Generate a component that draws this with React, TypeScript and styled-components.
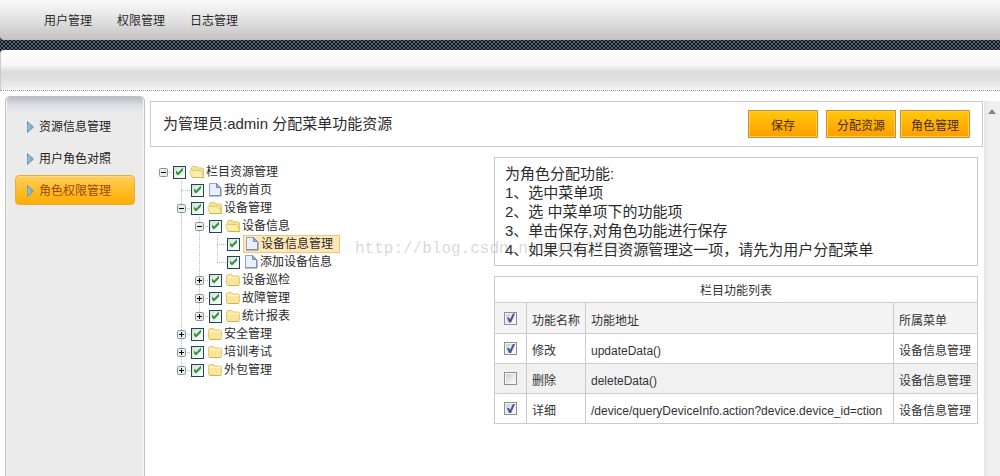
import React from "react";
import styled, { createGlobalStyle, css } from "styled-components";

const GlobalStyle = createGlobalStyle`
  *, *::before, *::after { box-sizing: border-box; }
  body {
    margin: 0;
    background: #fff;
    color: #2b2b2b;
    font-family: "Liberation Sans", "Noto Sans CJK SC", sans-serif;
    font-size: 12px;
    line-height: 18px;
  }
  ul { list-style: none; margin: 0; padding: 0; }
`;

const Page = styled.div`
  display: flex;
  flex-direction: column;
  min-height: 100vh;
`;

const Backdrop = styled.header`
  background-color: #0d1722;
  background-image:
    linear-gradient(45deg, transparent 42%, #55616d 42% 58%, transparent 58%),
    linear-gradient(135deg, transparent 42%, #55616d 42% 58%, transparent 58%);
  background-size: 4px 4px;
`;

const TopNav = styled.nav`
  display: flex;
  align-items: center;
  gap: 25px;
  height: 40px;
  margin-bottom: 10px;
  padding: 2px 0 0 44px;
  border-radius: 0 0 0 4px;
  background: linear-gradient(#fbfbfb, #dedede 55%, #c3c2c1);
`;

const TopLink = styled.a`
  color: #2b2b2b;
  font-size: 12px;
  text-decoration: none;
`;

const SubBar = styled.div`
  height: 41px;
  border-left: 1px solid #ccc;
  border-bottom: 1px dotted #999;
  border-radius: 4px 0 0 0;
  background: linear-gradient(#fff, #f6f6f6 38%, #dcdcdc 54%, #dedede 70%, #f1f1f1);
`;

const Body = styled.div`
  display: flex;
  flex: 1;
  padding-left: 5px;
  background: #fff;
`;

const Sidebar = styled.nav`
  flex: 0 0 140px;
  margin: 5px 5px 0 0;
  padding: 14px 9px 0;
  border: 1px solid #c2c2c2;
  border-bottom: 0;
  border-radius: 5px 5px 0 0;
  background: linear-gradient(#b8bcc4, #dcdee3 8px, #ebebeb 16px);
  box-shadow: inset 1px 0 #f6f6f6, inset -1px 0 #f6f6f6;
`;

const SideList = styled.ul`
  display: grid;
  gap: 2px;
`;

const SideLink = styled.a<{ $active?: boolean }>`
  display: flex;
  align-items: center;
  gap: 5px;
  height: 30px;
  padding: 1px 0 0 11px;
  border: 1px solid transparent;
  border-radius: 4px;
  color: #222;
  text-decoration: none;
  ${(p) =>
    p.$active &&
    css`
      color: #a0460c;
      border-color: #efa83a;
      background: linear-gradient(#ffcf5c, #fdba20 60%, #fdae08);
      box-shadow: inset 0 1px #ffdc88;
    `}
`;

const Main = styled.main`
  position: relative;
  flex: 1;
  min-width: 0;
  padding-top: 10px;
`;

const TitleBar = styled.div`
  display: flex;
  align-items: center;
  justify-content: space-between;
  height: 46px;
  margin-right: 1px;
  padding: 0 12px;
  border: 1px solid #ccc;
`;

const Title = styled.h1`
  margin: 0;
  font-size: 15px;
  font-weight: normal;
`;

const Actions = styled.div`
  display: flex;
  gap: 4px;
`;

const ActionButton = styled.button<{ $lead?: boolean }>`
  width: 70px;
  height: 28px;
  margin-right: ${(p) => (p.$lead ? "4px" : "0")};
  padding: 3px 0 0;
  border: 1px solid #c9922a;
  background: linear-gradient(#ffc90a, #ff9d00);
  box-shadow: inset 0 0 0 1px #ffc94a;
  color: #4a2c06;
  font: inherit;
`;

const Columns = styled.div`
  display: grid;
  grid-template-columns: 344px minmax(0, 1fr);
  padding: 10px 6px 0 0;
`;

const Tree = styled.ul`
  padding: 6px 0 0 5px;
`;

const Branch = styled.ul`
  padding-left: 18px;
`;

const TreeItem = styled.li<{ $root?: boolean }>`
  background: repeating-linear-gradient(#bbb 0 1px, transparent 1px 2px) 8px 0 / 1px 100% no-repeat;
  &:last-child { background-size: 1px 9px; }
  ${(p) => p.$root && css`&&{ background: none; }`}
`;

const TreeRow = styled.div`
  display: flex;
  align-items: center;
  height: 18px;
`;

const ToggleCell = styled.span`
  display: flex;
  align-items: center;
  flex: 0 0 18px;
  height: 18px;
  padding-left: 4px;
  background: repeating-linear-gradient(90deg, #bbb 0 1px, transparent 1px 2px) 8px 9px / 9px 1px no-repeat;
`;

const Toggle = styled.button`
  display: block;
  width: 9px;
  height: 9px;
  padding: 0;
  border: 0;
  background: #fff;
  svg { display: block; }
`;

const TreeCheck = styled.input`
  appearance: none;
  flex: 0 0 13px;
  height: 13px;
  margin: 0 3px 0 0;
  border: 1px solid #1f4660;
  background: linear-gradient(135deg, #dcdcd7, #fff);
  &:checked::before {
    content: "";
    display: block;
    width: 11px;
    height: 11px;
    background: #2b9a3a;
    clip-path: polygon(2px 4px, 4px 6px, 9px 1px, 9px 4px, 4px 9px, 2px 7px);
  }
`;

const NodeLabel = styled.label<{ $selected?: boolean }>`
  display: flex;
  align-items: center;
  gap: 1px;
  height: 18px;
  white-space: nowrap;
  ${(p) =>
    p.$selected &&
    css`
      padding-right: 6px;
      border: 1px solid #f5c479;
      background: #ffe6b8;
    `}
`;

const Detail = styled.div`
  display: grid;
  align-content: start;
  gap: 10px;
`;

const Help = styled.section`
  padding: 6px 10px;
  border: 1px solid #ccc;
  font-size: 15px;
  line-height: 19px;
  p { margin: 0; }
`;

const Table = styled.table`
  width: 100%;
  border-collapse: collapse;
  table-layout: fixed;
  color: #333;
  th, td {
    height: 31px;
    padding: 5px 0 0 5px;
    border: 1px solid #ccc;
    font-weight: normal;
    text-align: left;
    white-space: nowrap;
  }
  tbody td { height: 30px; }
  thead tr:nth-child(even) { background: #f4f4f4; }
  tbody tr:nth-child(even) { background: #f1f1f1; }
`;

const TableTitle = styled.th`
  && {
    height: 26px;
    padding: 2px 0 0;
    text-align: center;
  }
`;

const CheckCell = styled.td`
  && {
    padding: 0;
    text-align: center;
  }
`;

const RowCheck = styled.input`
  appearance: none;
  display: block;
  width: 13px;
  height: 13px;
  margin: 0 auto;
  border: 1px solid #8e8f8f;
  background: linear-gradient(135deg, #c4c9d0, #f6f6f6 80%);
  box-shadow: inset 0 0 0 1px #f4f4f4;
  &:checked::before {
    content: "";
    display: block;
    width: 11px;
    height: 11px;
    background: #3f5590;
    clip-path: polygon(2px 5px, 4px 5px, 5px 7px, 8px 1px, 10px 1px, 6px 10px, 4px 10px);
  }
`;

const Scrollbar = styled.div`
  flex: 0 0 16px;
  margin-top: 10px;
  padding: 0 0 0 4px;
  background: linear-gradient(90deg, #e5e5e5, #f0f0f0 5px);
`;

const Watermark = styled.span`
  position: absolute;
  left: 205px;
  top: 148px;
  color: rgba(120, 120, 120, 0.3);
  font: 16px/20px "Liberation Mono", monospace;
  pointer-events: none;
`;

const SideArrow = () => (
  <svg width="7" height="12" viewBox="0 0 7 12" aria-hidden="true">
    <path d="M.5.5 6.5 6 .5 11.5Z" fill="#72abd0" stroke="#6f9dbb" />
    <path d="M2 3v6" stroke="#add4eb" />
  </svg>
);

const ToggleIcon = ({ open }: { open: boolean }) => (
  <svg width="9" height="9" viewBox="0 0 9 9" aria-hidden="true">
    <rect x=".5" y=".5" width="8" height="8" rx="1" fill="#eceae6" stroke="#8496a9" />
    <path d={open ? "M2 4.5h5" : "M2 4.5h5M4.5 2v5"} stroke="#000" />
  </svg>
);

const FolderIcon = ({ open }: { open: boolean }) => (
  <svg width="16" height="16" viewBox="0 0 16 16" aria-hidden="true">
    {open ? (
      <>
        <path d="M2.5 12.5v-9l1-1h4l1.5 1.5h4.5l1 1v8Z" fill="#f5e391" stroke="#dcc670" />
        <path d="M3 13.5.7 7.5l.8-1h9.500l1.500 1 2 6Z" fill="#fbefa8" stroke="#e0ca75" />
        <path d="M3 13.5h12" stroke="#cdb25c" />
      </>
    ) : (
      <>
        <path d="M1.5 12.5v-9l1-1h4L8 4h5.500l1 1v7.500l-1 1h-11Z" fill="#f8e798" stroke="#e0cb7c" />
        <path d="M2.5 5.5h11.5" stroke="#fff7cc" />
        <path d="M2.5 13.5h11.5" stroke="#cdb25c" />
      </>
    )}
  </svg>
);

const FileIcon = () => (
  <svg width="16" height="16" viewBox="0 0 16 16" aria-hidden="true">
    <path d="M2.5 1.5h7l4 4v8h-11Z" fill="#e8f0fc" stroke="#8fa5ca" />
    <path d="M9.5 1.5v4h4Z" fill="#9eb8e0" stroke="#7088b4" />
    <path d="M2 14h12V6" fill="none" stroke="#6c82ab" />
  </svg>
);

type Node = { label: string; open?: boolean; selected?: boolean; file?: boolean; children?: Node[] };

const resources: Node = {
  label: "栏目资源管理",
  open: true,
  children: [
    { label: "我的首页", file: true },
    {
      label: "设备管理",
      open: true,
      children: [
        {
          label: "设备信息",
          open: true,
          children: [
            { label: "设备信息管理", file: true, selected: true },
            { label: "添加设备信息", file: true },
          ],
        },
        { label: "设备巡检" },
        { label: "故障管理" },
        { label: "统计报表" },
      ],
    },
    { label: "安全管理" },
    { label: "培训考试" },
    { label: "外包管理" },
  ],
};

const TreeNode = ({ node, path, root }: { node: Node; path: string; root?: boolean }) => (
  <TreeItem $root={root}>
    <TreeRow>
      <ToggleCell>
        {!node.file && (
          <Toggle type="button" aria-label={node.label} aria-expanded={!!node.open}>
            <ToggleIcon open={!!node.open} />
          </Toggle>
        )}
      </ToggleCell>
      <TreeCheck type="checkbox" id={path} defaultChecked />
      <NodeLabel htmlFor={path} $selected={node.selected}>
        {node.file ? <FileIcon /> : <FolderIcon open={!!node.open} />}
        {node.label}
      </NodeLabel>
    </TreeRow>
    {node.children && (
      <Branch>
        {node.children.map((child, i) => (
          <TreeNode key={child.label} node={child} path={`${path}-${i}`} />
        ))}
      </Branch>
    )}
  </TreeItem>
);

const topLinks = ["用户管理", "权限管理", "日志管理"];
const sideLinks = ["资源信息管理", "用户角色对照", "角色权限管理"];
const features = [
  { name: "修改", url: "updateData()", checked: true },
  { name: "删除", url: "deleteData()", checked: false },
  { name: "详细", url: "/device/queryDeviceInfo.action?device.device_id=ction", checked: true },
];

export default function App() {
  return (
    <Page>
      <GlobalStyle />
      <Backdrop>
        <TopNav>
          {topLinks.map((t) => (
            <TopLink key={t} href="#">{t}</TopLink>
          ))}
        </TopNav>
        <SubBar />
      </Backdrop>
      <Body>
        <Sidebar>
          <SideList>
            {sideLinks.map((t, i) => (
              <li key={t}>
                <SideLink href="#" $active={i === 2}>
                  <SideArrow />
                  {t}
                </SideLink>
              </li>
            ))}
          </SideList>
        </Sidebar>
        <Main>
          <TitleBar>
            <Title>为管理员:admin 分配菜单功能资源</Title>
            <Actions>
              <ActionButton type="button" $lead>保存</ActionButton>
              <ActionButton type="button">分配资源</ActionButton>
              <ActionButton type="button">角色管理</ActionButton>
            </Actions>
          </TitleBar>
          <Columns>
            <Tree>
              <TreeNode node={resources} path="node" root />
            </Tree>
            <Detail>
              <Help>
                <p>为角色分配功能:</p>
                <p>1、选中菜单项</p>
                <p>2、选 中菜单项下的功能项</p>
                <p>3、单击保存,对角色功能进行保存</p>
                <p>4、如果只有栏目资源管理这一项，请先为用户分配菜单</p>
              </Help>
              <Table>
                <colgroup>
                  <col width="32" />
                  <col width="59" />
                  <col />
                  <col width="84" />
                </colgroup>
                <thead>
                  <tr>
                    <TableTitle colSpan={4}>栏目功能列表</TableTitle>
                  </tr>
                  <tr>
                    <CheckCell as="th">
                      <RowCheck type="checkbox" aria-label="栏目功能列表" defaultChecked />
                    </CheckCell>
                    <th>功能名称</th>
                    <th>功能地址</th>
                    <th>所属菜单</th>
                  </tr>
                </thead>
                <tbody>
                  {features.map((f) => (
                    <tr key={f.name}>
                      <CheckCell>
                        <RowCheck type="checkbox" aria-label={f.name} defaultChecked={f.checked} />
                      </CheckCell>
                      <td>{f.name}</td>
                      <td>{f.url}</td>
                      <td>设备信息管理</td>
                    </tr>
                  ))}
                </tbody>
              </Table>
            </Detail>
          </Columns>
          <Watermark>http://blog.csdn.net/u012750853</Watermark>
        </Main>
        <Scrollbar>
          <svg width="8" height="5" viewBox="0 0 8 5" aria-hidden="true">
            <path d="M0 5 4 0 8 5Z" fill="#858585" />
          </svg>
        </Scrollbar>
      </Body>
    </Page>
  );
}
